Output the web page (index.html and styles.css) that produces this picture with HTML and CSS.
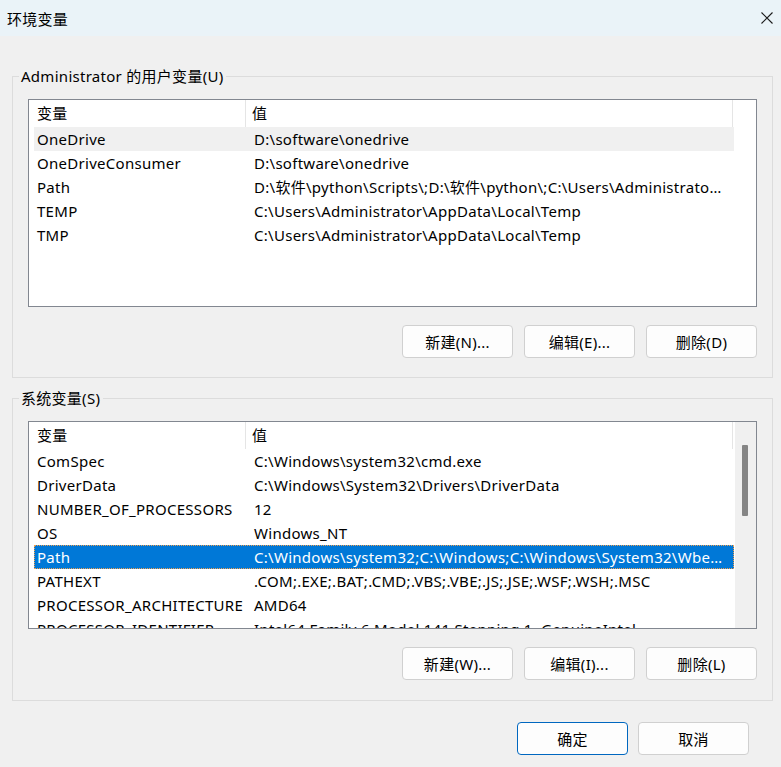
FILE: index.html
```html
<html>
<head>
<meta charset="utf-8">
<link rel="stylesheet" href="styles.css">
</head>
<body>
  <div class="titlebar">
    <span class="title">环境变量</span>
    <svg class="close" width="12" height="12" viewBox="0 0 12 12">
      <path d="M0.5 0.5 L11.5 11.5 M11.5 0.5 L0.5 11.5" stroke="#1b1b1b" stroke-width="1.1" fill="none"/>
    </svg>
  </div>

  <div class="dialog">
    <fieldset class="group">
      <legend>Administrator 的用户变量(U)</legend>
      <div class="list">
        <div class="table">
          <div class="head">
            <div class="h-name">变量</div>
            <div class="h-value">值</div>
          </div>
          <div class="row hover"><div class="c-name">OneDrive</div><div class="c-value">D:\software\onedrive</div></div>
          <div class="row"><div class="c-name">OneDriveConsumer</div><div class="c-value">D:\software\onedrive</div></div>
          <div class="row"><div class="c-name">Path</div><div class="c-value">D:\软件\python\Scripts\;D:\软件\python\;C:\Users\Administrator\AppData\Local\Microsoft\WindowsApps;</div></div>
          <div class="row"><div class="c-name">TEMP</div><div class="c-value">C:\Users\Administrator\AppData\Local\Temp</div></div>
          <div class="row"><div class="c-name">TMP</div><div class="c-value">C:\Users\Administrator\AppData\Local\Temp</div></div>
        </div>
        <div class="scroll empty"></div>
      </div>
      <div class="buttons">
        <button class="btn">新建(N)...</button>
        <button class="btn">编辑(E)...</button>
        <button class="btn">删除(D)</button>
      </div>
    </fieldset>

    <fieldset class="group group-sys">
      <legend>系统变量(S)</legend>
      <div class="list">
        <div class="table">
          <div class="head">
            <div class="h-name">变量</div>
            <div class="h-value">值</div>
          </div>
          <div class="row"><div class="c-name">ComSpec</div><div class="c-value">C:\Windows\system32\cmd.exe</div></div>
          <div class="row"><div class="c-name">DriverData</div><div class="c-value">C:\Windows\System32\Drivers\DriverData</div></div>
          <div class="row"><div class="c-name">NUMBER_OF_PROCESSORS</div><div class="c-value">12</div></div>
          <div class="row"><div class="c-name">OS</div><div class="c-value">Windows_NT</div></div>
          <div class="row selected"><div class="c-name">Path</div><div class="c-value">C:\Windows\system32;C:\Windows;C:\Windows\System32\Wbem;C:\Windows\System32\WindowsPowerShell\v1.0\</div></div>
          <div class="row"><div class="c-name">PATHEXT</div><div class="c-value">.COM;.EXE;.BAT;.CMD;.VBS;.VBE;.JS;.JSE;.WSF;.WSH;.MSC</div></div>
          <div class="row"><div class="c-name">PROCESSOR_ARCHITECTURE</div><div class="c-value">AMD64</div></div>
          <div class="row"><div class="c-name">PROCESSOR_IDENTIFIER</div><div class="c-value">Intel64 Family 6 Model 141 Stepping 1, GenuineIntel</div></div>
        </div>
        <div class="scroll"><div class="thumb"></div></div>
      </div>
      <div class="buttons">
        <button class="btn">新建(W)...</button>
        <button class="btn">编辑(I)...</button>
        <button class="btn">删除(L)</button>
      </div>
    </fieldset>

    <div class="footer">
      <button class="btn default">确定</button>
      <button class="btn">取消</button>
    </div>
  </div>
</body>
</html>
```

FILE: styles.css
```css
body {
  margin: 0;
  background: #f0f0f0;
  font-family: "Noto Sans", "Noto Sans CJK SC", sans-serif;
  font-size: 15px;
  letter-spacing: 0.28px;
  color: #000;
}

.titlebar {
  height: 36px;
  background: #eaf3f8;
  display: flex;
  align-items: center;
  justify-content: space-between;
  padding: 0 8px 0 7px;
}

.dialog {
  padding: 0 8px 0 12px;
}

.group {
  margin: 30px 0 0 0;
  min-width: 0;
  border: 1px solid #dcdcdc;
  padding: 13px 15px 19px 15px;
}

.group-sys {
  margin-top: 10px;
  padding-bottom: 20px;
}

.group legend {
  margin-left: -9px;
  padding: 0 3px 0 2px;
  line-height: 20px;
}

.list {
  height: 208px;
  box-sizing: border-box;
  border: 1px solid #828790;
  background: #fff;
  display: flex;
  overflow: hidden;
}

.table {
  width: 706px;
  flex: none;
}

.head {
  display: flex;
  height: 27px;
  line-height: 27px;
}

.h-name {
  width: 217px;
  padding-left: 8px;
  box-sizing: border-box;
  border-right: 1px solid #e5e5e5;
}

.h-value {
  width: 487px;
  padding-left: 6px;
  box-sizing: border-box;
  border-right: 1px solid #e5e5e5;
}

.row {
  display: flex;
  height: 24px;
  line-height: 24px;
  margin-left: 5px;
  width: 700px;
  box-sizing: border-box;
}

.row.hover {
  background: #f0f0f0;
}

.row.selected {
  background: #0078d7;
  color: #fff;
  outline: 1px dotted #f0a050;
  outline-offset: -1px;
}

.c-name {
  width: 212px;
  flex: none;
  padding-left: 3px;
  box-sizing: border-box;
  white-space: nowrap;
  overflow: hidden;
}

.c-value {
  flex: 1;
  min-width: 0;
  padding: 0 8px;
  white-space: nowrap;
  overflow: hidden;
  text-overflow: ellipsis;
}

.scroll {
  flex: 1;
  background: #f0f0f0;
}

.scroll.empty {
  background: #fff;
}

.thumb {
  margin: 23px 0 0 7px;
  width: 6px;
  height: 71px;
  background: #858585;
  border-radius: 1px;
}

.buttons {
  display: flex;
  justify-content: flex-end;
  gap: 11px;
  margin-top: 18px;
}

.btn {
  width: 111px;
  height: 33px;
  font-family: inherit;
  font-size: 15px;
  letter-spacing: inherit;
  color: #000;
  background: #fdfdfd;
  border: 1px solid #d0d0d0;
  border-radius: 4px;
  padding: 0;
}

.btn.default {
  border-color: #0067c0;
}

.footer {
  display: flex;
  justify-content: flex-end;
  gap: 10px;
  margin-top: 21px;
  padding-right: 24px;
}
```
